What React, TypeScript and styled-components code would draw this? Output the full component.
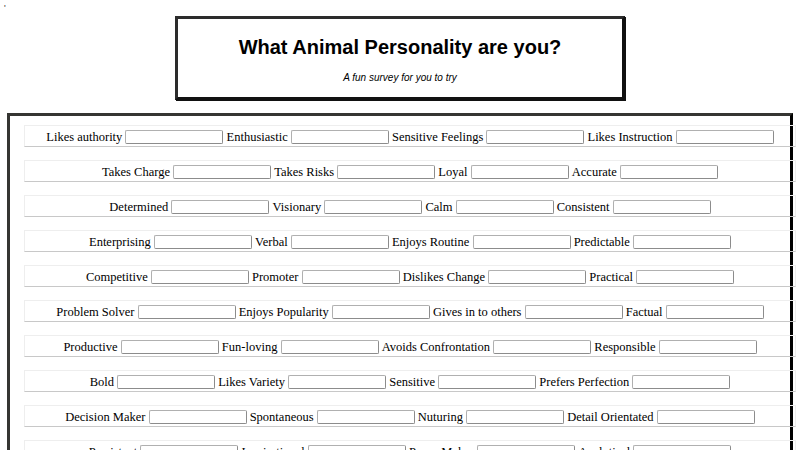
import React from "react";
import styled, { createGlobalStyle } from "styled-components";

const Global = createGlobalStyle`
  html, body { margin: 0; padding: 0; background: #fff; }
  body { font-family: "Liberation Serif", "Times New Roman", serif; color: #000; }
`;

const Page = styled.div`
  padding: 2px 7px 0 7px;
  width: 786px;
  overflow: hidden;
`;

const Stray = styled.div`
  font-family: "Liberation Sans", Arial, sans-serif;
  font-size: 9px;
  line-height: 10px;
  height: 11px;
  margin-left: -3px;
  padding-top: 1px;
  box-sizing: border-box;
  color: #333;
`;

const Header = styled.header`
  width: 444px;
  height: 78px;
  margin: 3px auto 0 auto;
  border: 3px solid #2c2c2c;
  border-right-color: #111;
  border-bottom-color: #111;
  box-shadow: 1px 1px 0 #111;
  text-align: center;
  font-family: "Liberation Sans", Arial, sans-serif;
`;

const Title = styled.h1`
  margin: 17px 0 0 0;
  font-size: 20px;
  line-height: 23px;
  font-weight: bold;
`;

const Subtitle = styled.p`
  margin: 13px 0 0 0;
  font-size: 10px;
  line-height: 12px;
  font-style: italic;
`;

const Survey = styled.section`
  margin-top: 13px;
  border: 3px solid #353532;
  border-right-color: #000;
  border-bottom-color: #000;
  padding: 9px 0 0 0;
  height: 340px;
`;

const Row = styled.div`
  margin: 0 0 13px 14px;
  width: 770px;
  height: 14px;
  border: 1px solid #eeeeee;
  border-bottom-color: #c8c8c8;
  padding: 3px 0;
  line-height: 14px;
  font-size: 12.5px;
  text-align: center;
  white-space: nowrap;
`;

const Label = styled.label`
  vertical-align: middle;
`;

const Field = styled.input`
  box-sizing: border-box;
  width: 98px;
  height: 14px;
  padding: 0;
  margin: 0;
  border: 1px solid #b0b0b0;
  border-right-color: #8c8c8c;
  border-bottom-color: #8c8c8c;
  border-radius: 2px;
  background: #fff;
  vertical-align: middle;
  font-size: 10px;
`;

const rows: string[][] = [
  ["Likes authority", "Enthusiastic", "Sensitive Feelings", "Likes Instruction"],
  ["Takes Charge", "Takes Risks", "Loyal", "Accurate"],
  ["Determined", "Visionary", "Calm", "Consistent"],
  ["Enterprising", "Verbal", "Enjoys Routine", "Predictable"],
  ["Competitive", "Promoter", "Dislikes Change", "Practical"],
  ["Problem Solver", "Enjoys Popularity", "Gives in to others", "Factual"],
  ["Productive", "Fun-loving", "Avoids Confrontation", "Responsible"],
  ["Bold", "Likes Variety", "Sensitive", "Prefers Perfection"],
  ["Decision Maker", "Spontaneous", "Nuturing", "Detail Orientated"],
  ["Persistent", "Inspirational", "Peace Maker", "Analytical"],
];

export default function App() {
  return (
    <>
      <Global />
      <Page>
        <Stray>'</Stray>
        <Header>
          <Title>What Animal Personality are you?</Title>
          <Subtitle>A fun survey for you to try</Subtitle>
        </Header>
        <Survey>
          {rows.map((r, i) => (
            <Row key={i}>
              {r.map((label, j) => (
                <React.Fragment key={j}>
                  {j > 0 ? " " : null}
                  <Label>{label}</Label> <Field type="text" />
                </React.Fragment>
              ))}
            </Row>
          ))}
        </Survey>
      </Page>
    </>
  );
}
